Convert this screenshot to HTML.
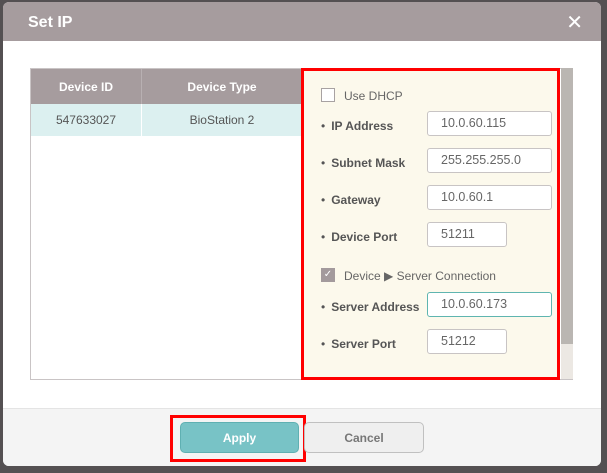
<!DOCTYPE html>
<html><head><style>
*{box-sizing:border-box;margin:0;padding:0}
body{width:607px;height:473px;background:#545052;font-family:"Liberation Sans",sans-serif;position:relative;overflow:hidden}
.dlg{position:absolute;left:3px;top:2px;width:598px;height:464px;background:#fff;border-radius:6px;overflow:hidden}
.hd{position:absolute;left:0;top:0;width:100%;height:39px;background:#a69c9e;color:#fff;font-size:16px;font-weight:bold}
.hd .t{position:absolute;left:25px;top:12px}
.hd .x{position:absolute;right:18px;top:8px;font-size:20px;font-weight:normal}
.ft{position:absolute;left:0;top:406px;width:100%;height:58px;background:#f4f4f4;border-top:1px solid #e4e4e4}
.tbl{position:absolute;left:30px;top:68px;width:543px;height:312px;border:1px solid #c9c4c5;background:#fff}
.th{position:absolute;top:0;height:35px;background:#a69c9e;color:#fff;font-size:12px;font-weight:bold;text-align:center;line-height:36px}
.td{position:absolute;top:35px;height:32px;background:#dcf0f0;color:#555;font-size:12px;text-align:center;line-height:32px}
.panel{position:absolute;left:301px;top:68px;width:259px;height:312px;background:#fcf9ec;border:3px solid #f00}
.sb{position:absolute;left:561px;top:68px;width:12px;height:311px;background:#ece8e3}
.sb div{height:276px;background:#bab6b2}
.lbl{position:absolute;left:17px;font-size:12px;font-weight:bold;color:#555}
.lbl:before{content:"•";margin-right:6px;font-weight:normal}
.in{position:absolute;left:123px;height:25px;border:1px solid #c8c4c4;border-radius:3px;background:#fff;font-size:12.5px;color:#666;padding-left:13px;line-height:23px}
.cb{position:absolute;left:17px;width:14px;height:14px;border:1px solid #a8a2a2;background:#fff}
.ct{position:absolute;left:40px;font-size:12px;color:#666}
.btn{position:absolute;top:422px;height:31px;border-radius:5px;font-size:12px;font-weight:bold;text-align:center;line-height:31px}
</style></head><body>
<div class="dlg">
<div class="hd"><span class="t">Set IP</span><span class="x">✕</span></div>
<div class="ft"></div>
</div>
<div class="tbl">
<div class="th" style="left:0;width:111px;border-right:1px solid #b8b0b2">Device ID</div>
<div class="th" style="left:111px;width:160px">Device Type</div>
<div class="td" style="left:0;width:111px;border-right:1px solid #fff">547633027</div>
<div class="td" style="left:111px;width:160px">BioStation 2</div>
</div>
<div class="sb"><div></div></div>
<div class="panel">
<div class="cb" style="top:17px"></div><div class="ct" style="top:18px">Use DHCP</div>
<div class="lbl" style="top:48px">IP Address</div><div class="in" style="top:40px;width:125px">10.0.60.115</div>
<div class="lbl" style="top:85px">Subnet Mask</div><div class="in" style="top:77px;width:125px">255.255.255.0</div>
<div class="lbl" style="top:122px">Gateway</div><div class="in" style="top:114px;width:125px">10.0.60.1</div>
<div class="lbl" style="top:159px">Device Port</div><div class="in" style="top:151px;width:80px">51211</div>
<div class="cb" style="top:197px;background:#a39a9c;border-color:#a39a9c;color:#fff;font-size:10px;line-height:12px;text-align:center">✓</div><div class="ct" style="top:198px">Device ▶ Server Connection</div>
<div class="lbl" style="top:229px">Server Address</div><div class="in" style="top:221px;width:125px;border-color:#5fb5b0">10.0.60.173</div>
<div class="lbl" style="top:266px">Server Port</div><div class="in" style="top:258px;width:80px">51212</div>
</div>
<div style="position:absolute;left:170px;top:415px;width:136px;height:47px;border:3px solid #f00"></div>
<div class="btn" style="left:180px;width:119px;background:#78c3c6;border:1px solid #5fb0b2;color:#fff">Apply</div>
<div class="btn" style="left:304px;width:120px;background:#efefef;border:1px solid #c0c0c0;color:#777">Cancel</div>
</body></html>
